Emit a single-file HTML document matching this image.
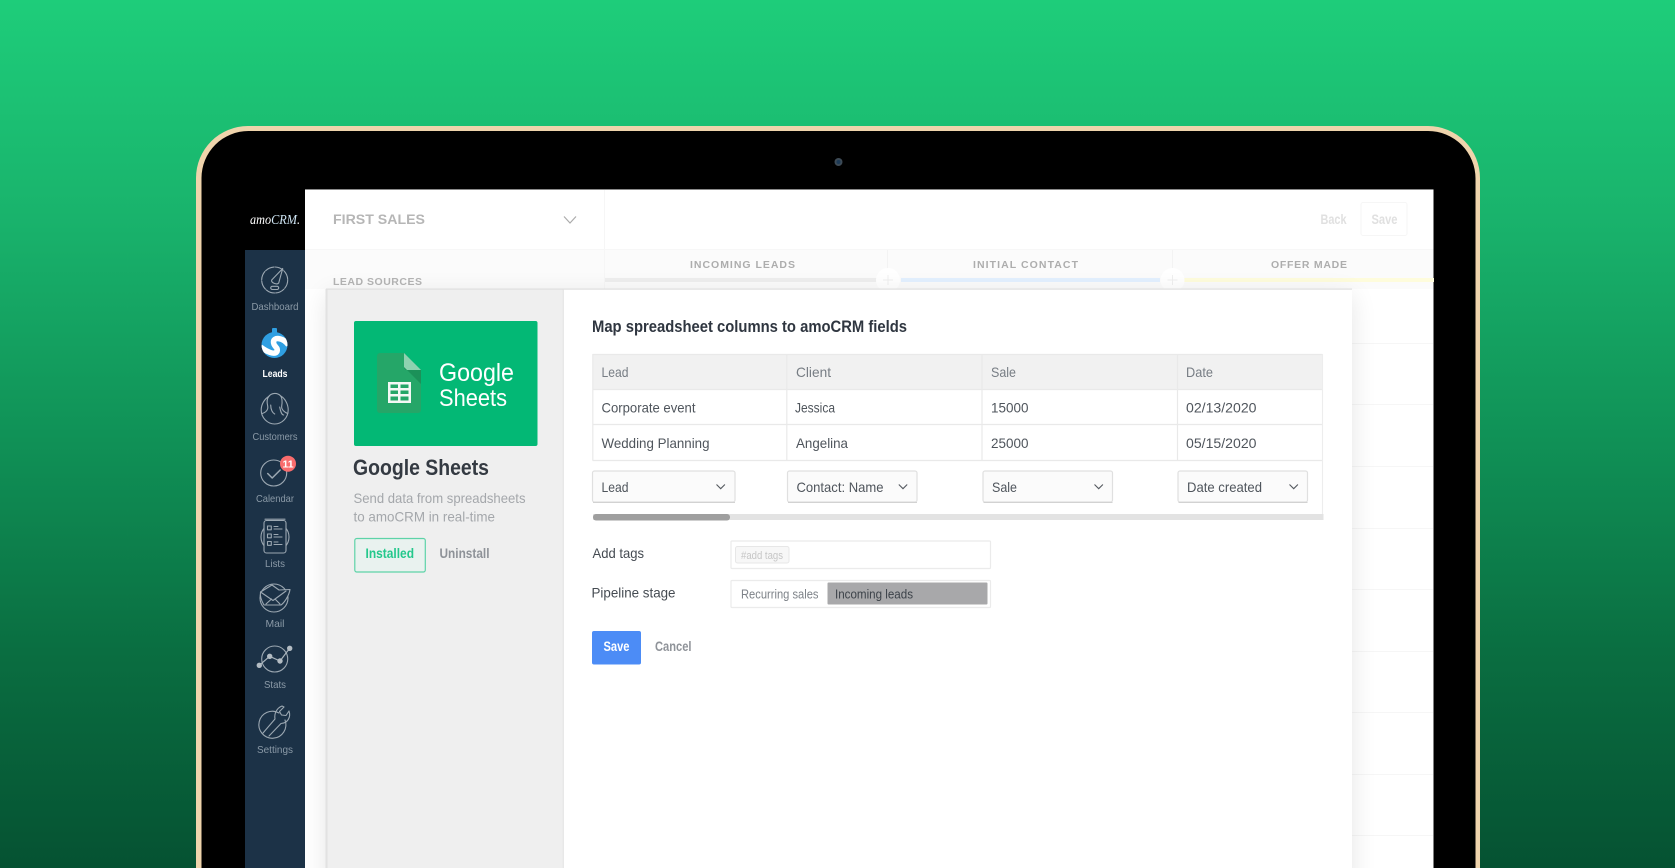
<!DOCTYPE html>
<html lang="en">
<head>
<meta charset="utf-8">
<title>amoCRM Google Sheets</title>
<style>
html,body{margin:0;padding:0;width:1675px;height:868px;overflow:hidden;background:#0e8a52}
svg{display:block;filter:blur(.35px)}
text{font-family:"Liberation Sans",Arial,sans-serif}
.nav{font-size:10.5px;fill:#8b9aa7;text-anchor:middle}
.ic{fill:none;stroke:#9ca8b2;stroke-width:1.1;stroke-linecap:round;stroke-linejoin:round}
.cell{font-size:14px;fill:#4f555c}
.th{font-size:14px;fill:#777d84}
.col{font-size:10.5px;font-weight:700;fill:#adadad}
</style>
</head>
<body>
<svg width="1675" height="868" viewBox="0 0 1675 868" xmlns="http://www.w3.org/2000/svg">
<defs>
<linearGradient id="bg" x1="0" y1="0" x2="0" y2="1">
<stop offset="0" stop-color="#1ecd7a"/>
<stop offset=".25" stop-color="#19b36c"/>
<stop offset=".5" stop-color="#109257"/>
<stop offset=".75" stop-color="#0a6e41"/>
<stop offset="1" stop-color="#055232"/>
</linearGradient>
<filter id="sh" x="-10%" y="-10%" width="120%" height="120%"><feGaussianBlur stdDeviation="13"/></filter>
<clipPath id="leadclip"><circle r="13"/></clipPath>
</defs>
<rect width="1675" height="868" fill="url(#bg)"/>

<!-- device -->
<path d="M196 880V178a52 52 0 0 1 52-52H1428a52 52 0 0 1 52 52V880Z" fill="#efd4ac"/>
<path d="M201.500 880V178a47 47 0 0 1 47-47H1428a47.500 47.500 0 0 1 47.500 47.500V880Z" fill="#000"/>
<circle cx="838.5" cy="162" r="4" fill="#3d4a55"/>
<circle cx="838.5" cy="162" r="2" fill="#1c3a57"/>

<!-- screen -->
<rect x="305" y="189.500" width="1128.500" height="680" fill="#fff"/>
<rect x="305" y="189" width="1128.500" height="1" fill="#8a8a8a"/>
<rect x="245" y="250" width="60" height="620" fill="#1c3247"/>
<rect x="305" y="249" width="1128.500" height="40" fill="#fbfbfb"/>
<rect x="604" y="190" width="1" height="99" fill="#f6f6f6"/>
<rect x="887" y="249" width="1" height="40" fill="#f3f3f3"/>
<rect x="1172" y="249" width="1" height="40" fill="#f3f3f3"/>
<rect x="305" y="249" width="1128.500" height="1" fill="#f7f7f7"/>

<!-- logo -->
<text x="250" y="224" font-size="14" font-style="italic" fill="#fff" textLength="50" lengthAdjust="spacingAndGlyphs" style="font-family:'Liberation Serif',serif">amo<tspan fill="#cfe6f5">CRM</tspan>.</text>

<!-- header -->
<text x="333" y="224" font-size="13.500" font-weight="700" fill="#b6b6b6" textLength="92" lengthAdjust="spacingAndGlyphs">FIRST SALES</text>
<path d="M564 216.500l6 6.500 6-6.500" fill="none" stroke="#ababab" stroke-width="1.200"/>
<text x="1320.500" y="224" font-size="14" font-weight="700" fill="#e0e0e0" textLength="26" lengthAdjust="spacingAndGlyphs">Back</text>
<rect x="1361" y="202.500" width="46" height="33" rx="2" fill="#fff" stroke="#f6f6f6"/>
<text x="1371.500" y="224" font-size="14" font-weight="700" fill="#e0e0e0" textLength="26" lengthAdjust="spacingAndGlyphs">Save</text>

<!-- columns -->
<text class="col" x="690" y="268" textLength="105" lengthAdjust="spacing">INCOMING LEADS</text>
<text class="col" x="973" y="268" textLength="105" lengthAdjust="spacing">INITIAL CONTACT</text>
<text class="col" x="1271" y="268" textLength="76" lengthAdjust="spacing">OFFER MADE</text>
<text x="333" y="285" font-size="10.500" font-weight="700" fill="#b4b4b4" textLength="89" lengthAdjust="spacing">LEAD SOURCES</text>
<rect x="605" y="278" width="272" height="4" fill="#eeeeee"/>
<rect x="901" y="278" width="259" height="4" fill="#e3f0ff"/>
<rect x="1184" y="278" width="250" height="4" fill="#fefcdc"/>
<circle cx="888" cy="280" r="12" fill="#fff"/>
<circle cx="1172.500" cy="280" r="12" fill="#fff"/>
<path d="M888 275v10M883 280h10M1172.500 275v10M1167.500 280h10" stroke="#efefef" fill="none"/>

<!-- rows behind modal -->
<path d="M1352 343.500H1433M1352 404.500H1433M1352 466.500H1433M1352 528.500H1433M1352 589.500H1433M1352 651.500H1433M1352 712.500H1433M1352 774.500H1433M1352 835.500H1433" stroke="#f6f6f6" fill="none"/>

<!-- modal -->
<rect x="326" y="295" width="1026" height="600" fill="#000" opacity=".1" filter="url(#sh)"/>
<rect x="326" y="289" width="1026" height="600" fill="#fff"/>
<rect x="326" y="289" width="237" height="600" fill="#efefef"/>
<rect x="325.500" y="289" width="2" height="600" fill="#e2e2e2"/>
<rect x="562.500" y="289" width="1.500" height="600" fill="#e8e8e8"/>
<rect x="326" y="288.500" width="1026" height="1.200" fill="#dfdfdf"/>

<!-- sheets tile -->
<rect x="354" y="321" width="183.500" height="125" rx="2" fill="#03b875"/>
<path d="M380 353h24l17 17v40a3 3 0 0 1-3 3h-38a3 3 0 0 1-3-3v-54a3 3 0 0 1 3-3Z" fill="#25a668"/>
<path d="M404 353l17 17h-14a3 3 0 0 1-3-3Z" fill="#8ed2b0"/>
<path d="M404 367c0 2 1 3 3 3h14v14Z" fill="#1c9159"/>
<path d="M388 382h23v21h-23Z" fill="#f4f8f5"/>
<path d="M390.500 384.500h7.500v3.500h-7.500ZM400.500 384.500h8v3.500h-8ZM390.500 390.500h7.500v3.500h-7.500ZM400.500 390.500h8v3.500h-8ZM390.500 396.500h7.500v4h-7.500ZM400.500 396.500h8v4h-8Z" fill="#25a668"/>
<text x="439" y="381" font-size="25" fill="#fff" textLength="75" lengthAdjust="spacingAndGlyphs">Google</text>
<text x="439" y="406" font-size="24" fill="#fff" textLength="68" lengthAdjust="spacingAndGlyphs">Sheets</text>

<!-- left panel -->
<text x="353" y="475" font-size="22" font-weight="700" fill="#343a42" textLength="136" lengthAdjust="spacingAndGlyphs">Google Sheets</text>
<text x="353.500" y="503" font-size="14" fill="#a4a7ab" textLength="172" lengthAdjust="spacingAndGlyphs">Send data from spreadsheets</text>
<text x="353.500" y="521.500" font-size="14" fill="#a4a7ab" textLength="141.500" lengthAdjust="spacingAndGlyphs">to amoCRM in real-time</text>
<rect x="354.800" y="538.500" width="70.500" height="33.500" rx="2" fill="#e9f2ef" stroke="#5ed3a8" stroke-width="1.200"/>
<text x="365.500" y="558" font-size="13.500" font-weight="700" fill="#24c88c" textLength="48.500" lengthAdjust="spacingAndGlyphs">Installed</text>
<text x="439.500" y="558" font-size="13.500" font-weight="700" fill="#8e9298" textLength="50" lengthAdjust="spacingAndGlyphs">Uninstall</text>

<!-- right panel -->
<text x="592" y="332" font-size="17" font-weight="700" fill="#2f3640" textLength="315" lengthAdjust="spacingAndGlyphs">Map spreadsheet columns to amoCRM fields</text>

<rect x="592.500" y="354" width="730" height="35.500" fill="#f1f1f1"/>
<path d="M592.500 354.500H1322.500M592.500 389.500H1322M592.500 424.500H1322M592.500 460.500H1322M592.800 354V460.500M786.800 354V460.500M982 354V460.500M1177.500 354V460.500" stroke="#e9e9e9" stroke-width="1.200" fill="none"/>
<path d="M1322.500 354V518" stroke="#ededed" stroke-width="1.200" fill="none"/>

<text class="th" x="601.500" y="377" textLength="27" lengthAdjust="spacingAndGlyphs">Lead</text>
<text class="th" x="796" y="377" textLength="35" lengthAdjust="spacingAndGlyphs">Client</text>
<text class="th" x="991" y="377" textLength="25" lengthAdjust="spacingAndGlyphs">Sale</text>
<text class="th" x="1186" y="377" textLength="27" lengthAdjust="spacingAndGlyphs">Date</text>

<text class="cell" x="601.500" y="412.500" textLength="94" lengthAdjust="spacingAndGlyphs">Corporate event</text>
<text class="cell" x="795" y="412.500" textLength="40" lengthAdjust="spacingAndGlyphs">Jessica</text>
<text class="cell" x="991" y="412.500" textLength="37.500" lengthAdjust="spacingAndGlyphs">15000</text>
<text class="cell" x="1186" y="412.500" textLength="70.500" lengthAdjust="spacingAndGlyphs">02/13/2020</text>

<text class="cell" x="601.500" y="448" textLength="108" lengthAdjust="spacingAndGlyphs">Wedding Planning</text>
<text class="cell" x="796" y="448" textLength="52" lengthAdjust="spacingAndGlyphs">Angelina</text>
<text class="cell" x="991" y="448" textLength="37.500" lengthAdjust="spacingAndGlyphs">25000</text>
<text class="cell" x="1186" y="448" textLength="70.500" lengthAdjust="spacingAndGlyphs">05/15/2020</text>

<!-- selects -->
<g fill="#fbfbfb" stroke="#e0e0e0" stroke-width="1.200">
<rect x="592.500" y="471" width="142.500" height="31" rx="2"/>
<rect x="787.500" y="471" width="129.500" height="31" rx="2"/>
<rect x="983" y="471" width="129.500" height="31" rx="2"/>
<rect x="1178" y="471" width="129.500" height="31" rx="2"/>
</g>
<path d="M593 502.500H735M788 502.500H917M983.500 502.500H1112.500M1178.500 502.500H1307.500" stroke="#d2d2d2" stroke-width="1" fill="none"/>
<text class="cell" x="601.500" y="492" textLength="27" lengthAdjust="spacingAndGlyphs">Lead</text>
<text class="cell" x="796.500" y="492" textLength="87" lengthAdjust="spacingAndGlyphs">Contact: Name</text>
<text class="cell" x="992" y="492" textLength="25" lengthAdjust="spacingAndGlyphs">Sale</text>
<text class="cell" x="1187" y="492" textLength="75" lengthAdjust="spacingAndGlyphs">Date created</text>
<path d="M716.500 484.500l4.200 4.200 4.200-4.200M898.800 484.500l4.200 4.200 4.200-4.200M1094.500 484.500l4.200 4.200 4.200-4.200M1289.500 484.500l4.200 4.200 4.200-4.200" fill="none" stroke="#555a60" stroke-width="1.100"/>

<!-- scrollbar -->
<rect x="593" y="514" width="730.500" height="6" fill="#e3e3e3"/>
<rect x="593" y="514" width="137" height="6.500" rx="3" fill="#9f9f9f"/>

<!-- tags -->
<text x="592.500" y="558" font-size="14" fill="#454b52" textLength="51.500" lengthAdjust="spacingAndGlyphs">Add tags</text>
<rect x="731" y="541" width="259.500" height="27.500" rx="1" fill="#fff" stroke="#ebebeb" stroke-width="1.200"/>
<rect x="735.500" y="546.500" width="53.500" height="16.500" rx="2" fill="#f7f7f7" stroke="#e7e7e7"/>
<text x="741" y="559" font-size="11" fill="#c6c6c6" textLength="42" lengthAdjust="spacingAndGlyphs">#add tags</text>

<text x="591.500" y="597.500" font-size="14" fill="#454b52" textLength="84" lengthAdjust="spacingAndGlyphs">Pipeline stage</text>
<rect x="731" y="580.500" width="259.500" height="27" rx="1" fill="#fff" stroke="#ebebeb" stroke-width="1.200"/>
<text x="741" y="598.500" font-size="13" fill="#7d8288" textLength="77.500" lengthAdjust="spacingAndGlyphs">Recurring sales</text>
<rect x="827.500" y="582.500" width="160" height="22" rx="1" fill="#a8a8aa"/>
<text x="835" y="598.500" font-size="13" fill="#3c4249" textLength="78" lengthAdjust="spacingAndGlyphs">Incoming leads</text>

<rect x="592" y="631" width="49" height="33.500" rx="2" fill="#4c8cf6"/>
<text x="603.500" y="651" font-size="13.500" font-weight="700" fill="#fff" textLength="26" lengthAdjust="spacingAndGlyphs">Save</text>
<text x="655" y="651" font-size="13.500" font-weight="700" fill="#8f9399" textLength="36.500" lengthAdjust="spacingAndGlyphs">Cancel</text>

<!-- sidebar: dashboard -->
<g class="ic" transform="translate(274.700 280)">
<circle r="13" stroke-dasharray="9 1.200"/>
<path d="M-3 0L8 -11.500L4 3C2.500 5 -4 3 -3 0Z"/>
<rect x="-4" y="6.300" width="8" height="3.200" rx="1.600"/>
</g>
<text class="nav" x="275" y="310" textLength="47" lengthAdjust="spacingAndGlyphs">Dashboard</text>

<!-- leads -->
<g transform="translate(274.500 345)">
<rect x="-2.500" y="-17" width="5" height="6" rx="1" fill="#2f9fe2"/>
<circle r="13" fill="#2f9fe2"/>
<g clip-path="url(#leadclip)">
<path d="M14 0C8 -8 -1 -8 -1 -3C-1 2 4 2 2.500 6.500C0 10.500 -8 6.500 -14 2" fill="none" stroke="#fff" stroke-width="5.500"/>
</g>
</g>
<text class="nav" x="275" y="377" style="fill:#fff;font-weight:700" textLength="25" lengthAdjust="spacingAndGlyphs">Leads</text>

<!-- customers -->
<g class="ic" transform="translate(274.700 410)">
<path d="M-6 -13.500C-3 -17.500 3 -17.500 6 -14C8 -11 7.500 -7 7 -4C6.500 -1 9 2 13 3.500"/>
<path d="M-12.500 3.500C-8 2 -6.500 -1 -7 -4C-8 -8 -8 -11 -6 -13.500"/>
<path d="M6 -14C10 -12 13.500 -6 13.500 0C13.500 8 7 14 0 14C-7 14 -13.500 8 -13.500 0C-13.500 -6 -10 -11 -6 -13.500"/>
<path d="M-4 -5C-4 0 -2 3 0 4M5 -3C6 2 7 5 9 5"/>
</g>
<text class="nav" x="275" y="440" textLength="45" lengthAdjust="spacingAndGlyphs">Customers</text>

<!-- calendar -->
<g class="ic" transform="translate(273.700 473)">
<circle r="13"/>
<path d="M-6 .5L-1.500 5L6.500 -3" stroke-width="1.500"/>
</g>
<circle cx="288" cy="463.700" r="8" fill="#f96c6d"/>
<text x="288" y="467.500" font-size="10.500" font-weight="700" fill="#fff" text-anchor="middle">11</text>
<text class="nav" x="275" y="502" textLength="38" lengthAdjust="spacingAndGlyphs">Calendar</text>

<!-- lists -->
<g class="ic" transform="translate(275 537)">
<circle r="14"/>
<rect x="-11" y="-16.500" width="22" height="32.500" rx="2.500" fill="#1c3247"/>
<path d="M-10 -17.800H10"/>
<rect x="-7.500" y="-11" width="3.800" height="3.800"/>
<rect x="-7.500" y="-3" width="3.800" height="3.800"/>
<rect x="-7.500" y="4.500" width="3.800" height="3.800"/>
<path d="M-1 -10.500H3M-1 -8H7M-1 -2.500H3M-1 0H7M-1 5H3M-1 7.500H7"/>
</g>
<text class="nav" x="275" y="567" textLength="20" lengthAdjust="spacingAndGlyphs">Lists</text>

<!-- mail -->
<g class="ic" transform="translate(275 598)">
<circle r="14" cx="-1"/>
<path d="M-14.500 -6L-3 -13L4 -8L15 -8.500C14 -2 9 5 6 7L-11 7C-14 2 -15 -3 -14.500 -6Z" fill="#1c3247"/>
<path d="M-14.500 -6L-2 2.500L11 -7M-9 6L-3.500 1M5 6L0 1"/>
</g>
<text class="nav" x="275" y="627" textLength="19" lengthAdjust="spacingAndGlyphs">Mail</text>

<!-- stats -->
<g class="ic" transform="translate(274.700 659)">
<circle r="13"/>
</g>
<path d="M259.300 665.300L269.700 656.300L280 661L289.700 648.300" fill="none" stroke="#a9b4bc" stroke-width="1.200"/>
<g fill="#b3bcc3">
<circle cx="259.300" cy="665.300" r="2.700"/>
<circle cx="269.700" cy="656.300" r="2.700"/>
<circle cx="280" cy="661" r="2.700"/>
<circle cx="289.700" cy="648.300" r="2.700"/>
</g>
<text class="nav" x="275" y="688" textLength="22" lengthAdjust="spacingAndGlyphs">Stats</text>

<!-- settings -->
<g class="ic" transform="translate(273 722)">
<path d="M6 -9A13.500 13.500 0 1 0 12 -2"/>
<path d="M-10 11L2 -3C1 -9 4 -14 9 -16L11 -15L6.500 -10.500L8.500 -7L13 -6.500L16 -11C18 -5 15 1 8 1.500L-4 14"/>
</g>
<text class="nav" x="275" y="753" textLength="36" lengthAdjust="spacingAndGlyphs">Settings</text>
</svg>
</body>
</html>
